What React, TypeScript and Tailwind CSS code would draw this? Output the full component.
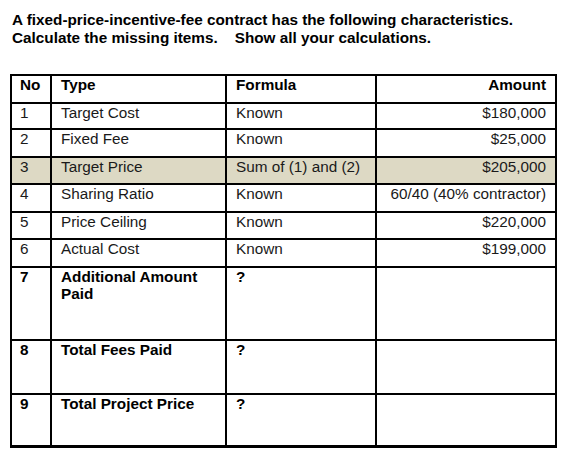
const rows = [
  { no: "1", type: "Target Cost", formula: "Known", amount: "$180,000", h: "h-[26px]" },
  { no: "2", type: "Fixed Fee", formula: "Known", amount: "$25,000", h: "h-[28px]" },
  { no: "3", type: "Target Price", formula: "Sum of (1) and (2)", amount: "$205,000", h: "h-[27px]", shade: true },
  { no: "4", type: "Sharing Ratio", formula: "Known", amount: "60/40 (40% contractor)", h: "h-[28px]" },
  { no: "5", type: "Price Ceiling", formula: "Known", amount: "$220,000", h: "h-[27px]" },
  { no: "6", type: "Actual Cost", formula: "Known", amount: "$199,000", h: "h-[28px]" },
];

const missing = [
  { no: "7", type: "Additional Amount Paid", h: "h-[73px]" },
  { no: "8", type: "Total Fees Paid", h: "h-[54px]" },
  { no: "9", type: "Total Project Price", h: "h-[52px]" },
];

const cell = "border-2 border-black align-top p-0 leading-[17px]";

export default function App() {
  return (
    <div className="w-[564px] h-[462px] bg-white text-black font-['Liberation_Sans',Arial,sans-serif]">
      <div className="pt-[11px] pl-[12px] text-[15.3px] font-bold leading-[18px]">
        <p>A fixed-price-incentive-fee contract has the following characteristics.</p>
        <p>
          Calculate the missing items.&nbsp;&nbsp;&nbsp; Show all your calculations.
        </p>
      </div>

      <table className="mt-[27px] ml-[10px] w-[547px] table-fixed border-collapse text-[15.3px]">
        <colgroup>
          <col className="w-[40px]" />
          <col className="w-[175px]" />
          <col className="w-[150px]" />
          <col />
        </colgroup>
        <thead>
          <tr className="h-[28px] font-bold">
            <th className={`${cell} pl-[8px] text-left`}>No</th>
            <th className={`${cell} pl-[9px] text-left`}>Type</th>
            <th className={`${cell} pl-[9px] text-left`}>Formula</th>
            <th className={`${cell} pr-[9px] text-right`}>Amount</th>
          </tr>
        </thead>
        <tbody className="text-[#1a1a1a]">
          {rows.map((r) => (
            <tr key={r.no} className={`${r.h} ${r.shade ? "bg-[#ddd9c4]" : ""}`}>
              <td className={`${cell} pl-[8px]`}>{r.no}</td>
              <td className={`${cell} pl-[9px]`}>{r.type}</td>
              <td className={`${cell} pl-[9px]`}>{r.formula}</td>
              <td className={`${cell} pr-[9px] text-right`}>{r.amount}</td>
            </tr>
          ))}
          {missing.map((r, i) => {
            const last = i === missing.length - 1 ? "border-b-[3px]" : "";
            return (
              <tr key={r.no} className={`${r.h} font-bold text-black`}>
                <td className={`${cell} pl-[8px] ${last}`}>{r.no}</td>
                <td className={`${cell} pl-[9px] pr-[20px] ${last}`}>{r.type}</td>
                <td className={`${cell} pl-[9px] ${last}`}>?</td>
                <td className={`${cell} ${last}`}></td>
              </tr>
            );
          })}
        </tbody>
      </table>
    </div>
  );
}
